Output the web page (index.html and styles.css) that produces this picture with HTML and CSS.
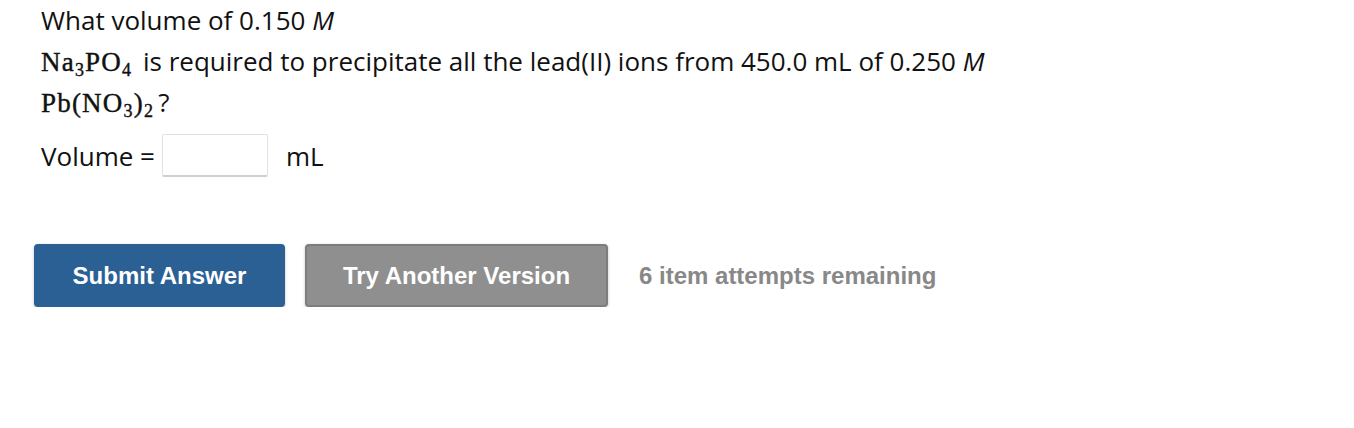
FILE: index.html
```html
<!DOCTYPE html>
<html>
<head>
<meta charset="utf-8">
<link rel="stylesheet" href="styles.css">
</head>
<body>
<div class="page">
  <div class="question">
    <p class="line">What volume of 0.150 <i>M</i></p>
    <p class="line"><span class="math">Na<sub>3</sub>PO<sub>4</sub></span> is required to precipitate all the lead(II) ions from 450.0 mL of 0.250 <i>M</i></p>
    <p class="line"><span class="math">Pb(NO<sub>3</sub>)<sub>2</sub></span>?</p>
  </div>
  <div class="answer">
    <span>Volume =</span>
    <input class="field" type="text">
    <span class="unit">mL</span>
  </div>
  <div class="actions">
    <button class="btn primary">Submit Answer</button>
    <button class="btn secondary">Try Another Version</button>
    <span class="attempts">6 item attempts remaining</span>
  </div>
</div>
</body>
</html>
```
FILE: styles.css
```css
html, body { margin: 0; background: #fff; }
.page {
  padding: 0 0 0 41px;
  font-family: "Open Sans", "Noto Sans", sans-serif;
  font-size: 26px;
  color: #111;
}
.question { padding-top: 3px; }
.line { margin: 0; height: 41px; line-height: 34px; white-space: nowrap; }
.line i { font-style: italic; }
.math {
  font-family: "Liberation Serif", serif;
  font-size: 27px;
  letter-spacing: 1.2px;
  color: #111;
  margin-right: 4px;
  -webkit-text-stroke: 0.4px #111;
}
.math sub { font-size: 18px; vertical-align: -5px; line-height: 0; }
.answer {
  display: flex;
  align-items: center;
  gap: 7px;
  margin-top: 8px;
}
.field {
  width: 106px;
  height: 43px;
  box-sizing: border-box;
  border: 1px solid #e2e2e2;
  border-bottom: 2px solid #cfcfcf;
  border-radius: 2px;
  margin-right: 11px;
}
.actions {
  display: flex;
  align-items: center;
  margin-top: 67px;
  margin-left: -7px;
}
.btn {
  font-family: "Liberation Sans", Arial, sans-serif;
  font-weight: bold;
  font-size: 24px;
  color: #fff;
  height: 63px;
  border-radius: 4px;
  border: none;
  box-shadow: 0 1px 3px rgba(0,0,0,0.25);
}
.primary { width: 251px; background: #2a6094; margin-right: 20px; }
.secondary { width: 303px; background: #8f8f8f; border: 2px solid #7d7d7d; }
.attempts {
  font-family: "Liberation Sans", Arial, sans-serif;
  font-weight: bold;
  font-size: 24px;
  color: #888;
  margin-left: 31px;
}
```
